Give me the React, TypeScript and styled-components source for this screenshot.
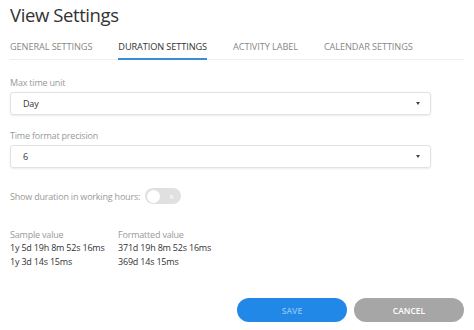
import React from 'react'
import styled, { createGlobalStyle } from 'styled-components'

const GlobalStyle = createGlobalStyle`
  html, body {
    margin: 0;
    padding: 0;
    background: #fff;
  }
  body {
    font-family: 'Open Sans', 'Noto Sans', sans-serif;
    color: #333;
  }
`

const Page = styled.main`
  width: 474px;
  height: 330px;
  box-sizing: border-box;
  padding: 3px 10px 0;
  display: flex;
  flex-direction: column;
`

const Title = styled.h1`
  margin: 0;
  font-size: 18.5px;
  letter-spacing: -0.4px;
  font-weight: 400;
  line-height: 24px;
  color: #333;
`

const Tabs = styled.nav`
  display: flex;
  gap: 26px;
  margin-top: 9px;
  border-bottom: 1px solid #eee;
`

const Tab = styled.div<{ $active?: boolean }>`
  font-size: 9.2px;
  letter-spacing: -0.1px;
  line-height: 14px;
  padding: 4px 0 4px;
  color: ${({ $active }) => ($active ? '#333' : '#888')};
  border-bottom: 2px solid ${({ $active }) => ($active ? '#3a8ed6' : 'transparent')};
  margin-bottom: -1px;
`

const Form = styled.section`
  display: flex;
  flex-direction: column;
  margin-top: 16px;
`

const Label = styled.div`
  font-size: 9px;
  letter-spacing: -0.2px;
  color: #999;
  line-height: 13px;
`

const Select = styled.div`
  width: 421px;
  height: 23px;
  box-sizing: border-box;
  margin: 3px 0 14px;
  padding: 0 10px 0 12px;
  display: flex;
  align-items: center;
  justify-content: space-between;
  border: 1px solid #e2e2e2;
  border-radius: 3px;
  box-shadow: 0 1px 2px rgba(0, 0, 0, 0.08);
  font-size: 9px;
  letter-spacing: -0.2px;
  color: #333;
`

const Caret = styled.span`
  width: 0;
  height: 0;
  border-left: 2.5px solid transparent;
  border-right: 2.5px solid transparent;
  border-top: 3px solid #444;
`

const ToggleRow = styled.div`
  display: flex;
  align-items: center;
  gap: 5px;
  margin-top: 6px;
`

const Switch = styled.div`
  width: 36px;
  height: 16px;
  border-radius: 8px;
  background: #e0e0e0;
  display: flex;
  align-items: center;
  justify-content: space-between;
  padding: 0 7px 0 2px;
  box-sizing: border-box;
`

const Knob = styled.span`
  width: 13px;
  height: 13px;
  border-radius: 50%;
  background: #fff;
`

const Cross = styled.span`
  font-size: 9px;
  line-height: 1;
  color: #fff;
`

const Samples = styled.div`
  display: grid;
  grid-template-columns: 108px auto;
  margin-top: 24px;
`

const Column = styled.div`
  display: flex;
  flex-direction: column;
`

const Value = styled.div`
  font-size: 9px;
  letter-spacing: -0.2px;
  line-height: 14px;
  color: #333;
`

const Footer = styled.div`
  display: flex;
  justify-content: flex-end;
  gap: 7px;
  margin-top: auto;
  margin-bottom: 8px;
`

const Button = styled.button<{ $variant: 'primary' | 'secondary' }>`
  width: 110px;
  height: 24px;
  border: none;
  border-radius: 12px;
  font-family: inherit;
  font-size: 8.5px;
  font-weight: 600;
  background: ${({ $variant }) => ($variant === 'primary' ? '#2288e8' : '#a6a6a6')};
  color: ${({ $variant }) => ($variant === 'primary' ? '#8cc3f3' : '#fff')};
`

export default function App() {
  return (
    <>
      <GlobalStyle />
      <Page>
        <Title>View Settings</Title>
        <Tabs>
          <Tab>GENERAL SETTINGS</Tab>
          <Tab $active>DURATION SETTINGS</Tab>
          <Tab>ACTIVITY LABEL</Tab>
          <Tab>CALENDAR SETTINGS</Tab>
        </Tabs>
        <Form>
          <Label>Max time unit</Label>
          <Select>
            Day
            <Caret />
          </Select>
          <Label>Time format precision</Label>
          <Select>
            6
            <Caret />
          </Select>
          <ToggleRow>
            <Label>Show duration in working hours:</Label>
            <Switch>
              <Knob />
              <Cross>×</Cross>
            </Switch>
          </ToggleRow>
          <Samples>
            <Column>
              <Label>Sample value</Label>
              <Value>1y 5d 19h 8m 52s 16ms</Value>
              <Value>1y 3d 14s 15ms</Value>
            </Column>
            <Column>
              <Label>Formatted value</Label>
              <Value>371d 19h 8m 52s 16ms</Value>
              <Value>369d 14s 15ms</Value>
            </Column>
          </Samples>
        </Form>
        <Footer>
          <Button $variant="primary">SAVE</Button>
          <Button $variant="secondary">CANCEL</Button>
        </Footer>
      </Page>
    </>
  )
}
